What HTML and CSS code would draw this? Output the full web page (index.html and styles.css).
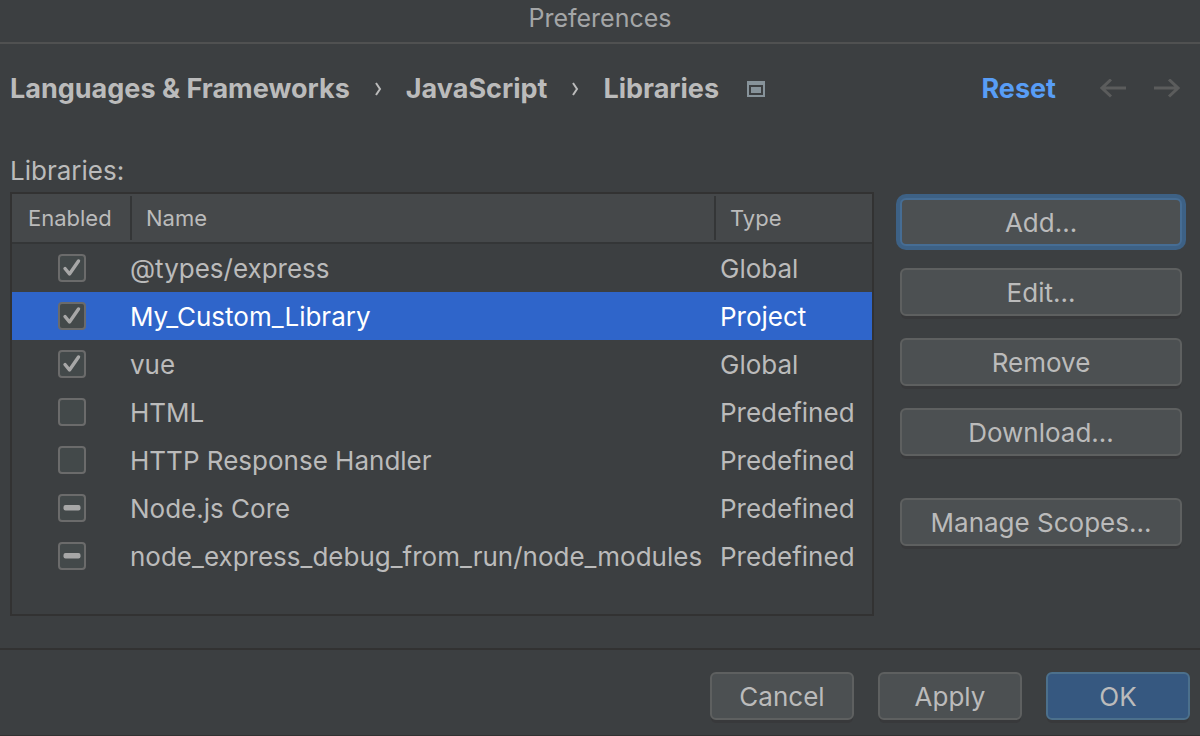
FILE: index.html
```html
<!DOCTYPE html>
<html lang="en">

<head>
    <meta charset="UTF-8">
    <title>Preferences</title>
    <link rel="stylesheet" href="styles.css">
</head>

<body>
    <header class="title-bar">
        <h1>Preferences</h1>
    </header>
    <main class="content">
        <div class="toolbar">
            <nav class="breadcrumb">
                <span>Languages &amp; Frameworks</span>
                <svg class="crumb-arrow" viewBox="0 0 8 14" width="8" height="14"><path d="M2 1 L6 7 L2 13" /></svg>
                <span>JavaScript</span>
                <svg class="crumb-arrow" viewBox="0 0 8 14" width="8" height="14"><path d="M2 1 L6 7 L2 13" /></svg>
                <span>Libraries</span>
                <svg class="project-icon" viewBox="0 0 18 16" width="18" height="16">
                    <path fill-rule="evenodd" d="M0 0H18V16H0Z M2 4V14H16V4Z" />
                    <path d="M4 6H14V12H4Z" />
                </svg>
            </nav>
            <div class="history">
                <a class="reset" href="#">Reset</a>
                <button class="nav-button" type="button" aria-label="Back" disabled>
                    <svg viewBox="0 0 26 20" width="26" height="20"><path d="M26 9H2 M11 0.5L2 9L11 17.5" /></svg>
                </button>
                <button class="nav-button" type="button" aria-label="Forward" disabled>
                    <svg viewBox="0 0 26 20" width="26" height="20"><path d="M0 9H24 M15 0.5L24 9L15 17.5" /></svg>
                </button>
            </div>
        </div>

        <h2 class="list-title" id="list-title">Libraries:</h2>
        <div class="panel">
            <div class="table-box">
                <table class="libraries" aria-labelledby="list-title">
                    <colgroup>
                        <col class="col-enabled">
                        <col>
                        <col class="col-type">
                    </colgroup>
                    <thead>
                        <tr>
                            <th><span>Enabled</span></th>
                            <th><span>Name</span></th>
                            <th><span>Type</span></th>
                        </tr>
                    </thead>
                    <tbody>
                        <tr>
                            <td><input type="checkbox" id="lib-1" checked></td>
                            <td><label for="lib-1">@types/express</label></td>
                            <td>Global</td>
                        </tr>
                        <tr class="selected">
                            <td><input type="checkbox" id="lib-2" checked></td>
                            <td><label for="lib-2">My_Custom_Library</label></td>
                            <td>Project</td>
                        </tr>
                        <tr>
                            <td><input type="checkbox" id="lib-3" checked></td>
                            <td><label for="lib-3">vue</label></td>
                            <td>Global</td>
                        </tr>
                        <tr>
                            <td><input type="checkbox" id="lib-4"></td>
                            <td><label for="lib-4">HTML</label></td>
                            <td>Predefined</td>
                        </tr>
                        <tr>
                            <td><input type="checkbox" id="lib-5"></td>
                            <td><label for="lib-5">HTTP Response Handler</label></td>
                            <td>Predefined</td>
                        </tr>
                        <tr>
                            <td><input type="checkbox" id="lib-6" class="partial"></td>
                            <td><label for="lib-6">Node.js Core</label></td>
                            <td>Predefined</td>
                        </tr>
                        <tr>
                            <td><input type="checkbox" id="lib-7" class="partial"></td>
                            <td><label for="lib-7">node_express_debug_from_run/node_modules</label></td>
                            <td>Predefined</td>
                        </tr>
                    </tbody>
                </table>
            </div>
            <div class="actions">
                <button class="btn focused" type="button">Add...</button>
                <button class="btn" type="button">Edit...</button>
                <button class="btn" type="button">Remove</button>
                <button class="btn" type="button">Download...</button>
                <button class="btn scopes" type="button">Manage Scopes...</button>
            </div>
        </div>
    </main>
    <footer class="footer">
        <button class="btn" type="button">Cancel</button>
        <button class="btn" type="button">Apply</button>
        <button class="btn primary" type="button">OK</button>
    </footer>
    <script>
        // partly enabled libraries
        var partial = document.querySelectorAll('.partial');
        for (var i = 0; i < partial.length; i++) {
            partial[i].indeterminate = true;
        }
        // select a row on click
        var rows = document.querySelectorAll('.libraries tbody tr');
        rows.forEach(function (row) {
            row.addEventListener('click', function () {
                document.querySelector('.selected').classList.remove('selected');
                row.classList.add('selected');
            });
        });
    </script>
</body>

</html>
```
FILE: styles.css
```css
* {
    box-sizing: border-box;
    margin: 0;
    padding: 0;
}

body {
    display: flex;
    flex-direction: column;
    min-height: 100vh;
    background: #3c3f41;
    color: #bbbbbb;
    font-family: Inter, "Liberation Sans", sans-serif;
    font-size: 26px;
    line-height: 32px;
}

/* title bar */
.title-bar {
    padding: 2px 0 8px;
    border-bottom: 2px solid #505151;
    text-align: center;
}

.title-bar h1 {
    font-size: 25px;
    font-weight: 400;
    color: #a4a6a7;
}

.content {
    flex: 1;
    display: flex;
    flex-direction: column;
    padding: 29px 18px 32px 10px;
}

/* breadcrumb and history */
.toolbar {
    display: flex;
    justify-content: space-between;
    align-items: center;
    padding-right: 2px;
    font-size: 27px;
    font-weight: 700;
}

.breadcrumb {
    display: flex;
    align-items: center;
    gap: 24px;
    white-space: nowrap;
}

.crumb-arrow {
    fill: none;
    stroke: #bbbbbb;
    stroke-width: 2;
}

.project-icon {
    margin-left: 4px;
    fill: #87939a;
}

.history {
    display: flex;
    align-items: center;
    gap: 28px;
}

.reset {
    margin-right: 16px;
    color: #589df6;
    text-decoration: none;
}

.nav-button {
    display: flex;
    border: none;
    background: none;
}

.nav-button svg {
    fill: none;
    stroke: #5b5c5c;
    stroke-width: 3;
}

.list-title {
    margin-top: 50px;
    font-size: 26px;
    font-weight: 400;
}

/* libraries table */
.panel {
    flex: 1;
    display: flex;
    gap: 26px;
    margin-top: 5px;
}

.table-box {
    flex: 1;
    border: 2px solid #323232;
}

.libraries {
    width: 100%;
    table-layout: fixed;
    border-collapse: separate;
    border-spacing: 0;
    white-space: nowrap;
}

.col-enabled {
    width: 118px;
}

.col-type {
    width: 158px;
}

.libraries th {
    height: 50px;
    padding: 2px 0;
    background: #45484a;
    border-bottom: 2px solid #343637;
    font-size: 22px;
    font-weight: 400;
    text-align: left;
}

.libraries th span {
    display: block;
    padding-left: 14px;
    border-left: 2px solid #343637;
    line-height: 44px;
}

.libraries th:first-child span {
    border-color: transparent;
}

.libraries td {
    height: 48px;
    padding-top: 2px;
}

.libraries td:first-child {
    padding: 0 0 0 46px;
}

.libraries td:last-child {
    padding-left: 6px;
}

.libraries .selected {
    background: #2f65ca;
    color: #ffffff;
}

.libraries input {
    appearance: none;
    display: block;
    width: 28px;
    height: 28px;
    border: 2px solid #6b6b6b;
    border-radius: 4px;
    background: #43494a;
}

.libraries input:checked {
    background: #43494a url("data:image/svg+xml,%3Csvg xmlns='http://www.w3.org/2000/svg' viewBox='0 0 24 24'%3E%3Cpath d='M5 12.5L9.5 18L18.5 5' fill='none' stroke='%23a7a7a7' stroke-width='3.4' stroke-linecap='round' stroke-linejoin='round'/%3E%3C/svg%3E") center / 24px 24px no-repeat;
}

.libraries input:indeterminate {
    background: #43494a url("data:image/svg+xml,%3Csvg xmlns='http://www.w3.org/2000/svg' viewBox='0 0 24 24'%3E%3Crect x='3.5' y='9' width='17' height='5.5' rx='2' fill='%23a7a7a7'/%3E%3C/svg%3E") center / 24px 24px no-repeat;
}

/* buttons */
.btn {
    height: 48px;
    border: 2px solid #5e6060;
    border-radius: 6px;
    background: #4c5052;
    box-shadow: 0 4px 0 -1px #38393b;
    color: #bbbbbb;
    font-family: inherit;
    font-size: 26px;
}

.btn.focused {
    border-color: #466d94;
    box-shadow: 0 0 0 4px #3d6185;
}

.btn.primary {
    border-color: #4c708c;
    background: #365880;
}

.actions {
    display: flex;
    flex-direction: column;
    gap: 22px;
    width: 282px;
    padding-top: 6px;
}

.scopes {
    margin-top: 20px;
}

.footer {
    display: flex;
    justify-content: flex-end;
    gap: 24px;
    padding: 22px 10px 15px;
    border-top: 2px solid #323232;
    border-bottom: 1px solid #323232;
}

.footer .btn {
    width: 144px;
}
```
